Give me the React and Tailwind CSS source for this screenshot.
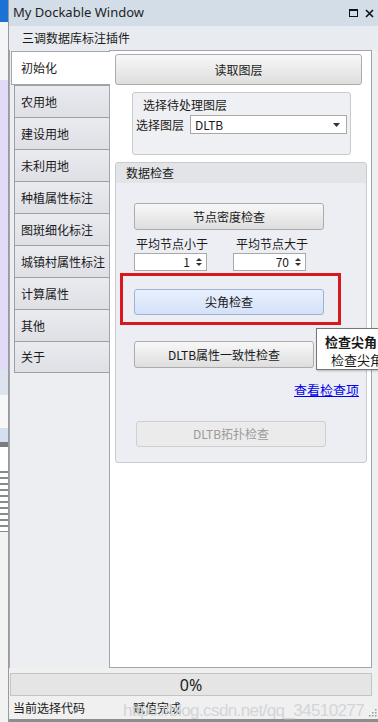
import React from 'react'

const tabs = ['农用地', '建设用地', '未利用地', '种植属性标注', '图斑细化标注', '城镇村属性标注', '计算属性', '其他', '关于']

function Btn({ children, className = '', variant = 'normal' }) {
  const look =
    variant === 'hot'
      ? 'border-[#9db3d6] bg-linear-to-b from-[#e9f0fd] to-[#d3e1f8] text-[#1a1a1a]'
      : variant === 'off'
      ? 'border-[#cdcfd2] bg-[#ebebeb] text-[#9b9b9b]'
      : 'border-[#acacac] bg-linear-to-b from-[#f8f8f8] to-[#dedede] text-[#1a1a1a]'
  return (
    <div className={`flex items-center justify-center rounded-[3px] border ${look} ${className}`}>
      {children}
    </div>
  )
}

function SpinBox({ value }) {
  return (
    <div className="flex h-[18px] w-[73px] items-center justify-end border border-[#a9a9a9] bg-white pr-[4px]">
      <span className="mr-[6px] text-[12px]">{value}</span>
      <svg width="6" height="12" viewBox="0 0 6 12">
        <path d="M0 5 L3 2 L6 5 Z" fill="#333" />
        <path d="M0 7 L3 10 L6 7 Z" fill="#333" />
      </svg>
    </div>
  )
}

function LeftStrip() {
  return (
    <div className="flex w-[8px] flex-col">
      <div className="h-[22px] bg-[#1b72d4]" />
      <div className="h-[58px] bg-[#f4f5f7]" />
      <div className="h-[290px] bg-[#e2daf6]" />
      <div className="h-[25px] bg-[#dde4ee]" />
      <div className="h-[33px] bg-[#f7f7f7]" />
      <div className="h-[14px] bg-[#d4e0ef]" />
      <div className="h-[5px] bg-[#7c7c7c]" />
      <div className="h-[21px] bg-white" />
      <div className="h-[64px] bg-[repeating-linear-gradient(to_bottom,#ffffff_0px,#ffffff_3px,#8a8a8a_3px,#8a8a8a_5px,#ffffff_5px,#ffffff_6px)]" />
      <div className="flex-1 bg-[#f2f2f2]" />
    </div>
  )
}

export default function App() {
  return (
    <div className="relative flex h-[722px] w-[378px] overflow-hidden bg-[#f0f0f0] text-[12px] text-[#1a1a1a] [font-family:'Noto_Sans_CJK_SC',sans-serif]">
      <LeftStrip />

      <div className="flex flex-1 flex-col border-l border-[#979a9e]">
        {/* title bar */}
        <div className="flex h-[26px] items-center justify-between bg-[#d2dde8] pl-[4px] pr-[4px]">
          <span className="text-[13px] text-[#1e1e1e] [font-family:'Noto_Sans',sans-serif]">My Dockable Window</span>
          <div className="flex items-center gap-[7px]">
            <div className="h-[8px] w-[9px] border border-t-2 border-[#111]" />
            <svg width="9" height="9" viewBox="0 0 9 9">
              <path d="M1 1 L8 8 M8 1 L1 8" stroke="#111" strokeWidth="1.6" />
            </svg>
          </div>
        </div>

        {/* plugin tab */}
        <div className="flex h-[24px] items-center bg-[#e8ebef] pl-[13px]">
          <span className="text-[12px]">三调数据库标注插件</span>
        </div>

        {/* body */}
        <div className="flex flex-1 pr-[6px]">
          <div className="flex w-[101px] flex-col border-l border-r border-[#a2a6ac] bg-[#eceef2] pt-[1px]">
            <div className="relative z-10 -mr-[1px] ml-[1px] flex h-[34px] items-center border-b border-l border-t border-[#a2a6ac] bg-white pl-[9px]">
              初始化
            </div>
            {tabs.map((t, i) => (
              <div
                key={t}
                className={`ml-[4px] flex h-[32px] items-center border-l border-t border-[#9ca0a6] bg-linear-to-b from-[#eaebef] to-[#dfe0e6] pl-[6px] ${i === tabs.length - 1 ? 'border-b' : ''}`}
              >
                {t}
              </div>
            ))}
          </div>

          <div className="flex flex-1 flex-col border-b border-r border-t border-[#a2a6ac] bg-white">
            <Btn className="ml-[5px] mt-[3px] h-[31px] w-[247px]">读取图层</Btn>

            <div className="ml-[22px] mt-[7px] flex h-[63px] w-[219px] flex-col rounded-[3px] border border-[#c8cace] bg-[#eff0f3] pt-[3px]">
              <div className="h-[18px] pl-[10px] leading-[18px]">选择待处理图层</div>
              <div className="mt-[1px] flex items-center pl-[3px]">
                <span className="w-[54px]">选择图层</span>
                <div className="flex h-[19px] w-[157px] items-center justify-between border border-[#a9a9a9] bg-white pl-[4px] pr-[6px]">
                  <span>DLTB</span>
                  <svg width="7" height="4" viewBox="0 0 7 4">
                    <path d="M0 0 L7 0 L3.5 4 Z" fill="#333" />
                  </svg>
                </div>
              </div>
            </div>

            <div className="relative ml-[5px] mt-[7px] flex h-[301px] w-[252px] flex-col rounded-[3px] border border-[#c8cace] bg-[#eceef3]">
              <div className="h-[20px] rounded-t-[3px] bg-[#e2e4e8] pl-[10px] leading-[20px]">数据检查</div>

              <Btn className="ml-[18px] mt-[20px] h-[27px] w-[190px]">节点密度检查</Btn>

              <div className="mt-[6px] flex h-[16px] items-center">
                <span className="ml-[20px] w-[100px]">平均节点小于</span>
                <span>平均节点大于</span>
              </div>
              <div className="mt-[1px] flex">
                <div className="ml-[18px]"><SpinBox value="1" /></div>
                <div className="ml-[26px]"><SpinBox value="70" /></div>
              </div>

              <Btn variant="hot" className="ml-[18px] mt-[18px] h-[26px] w-[190px]">尖角检查</Btn>

              <Btn className="ml-[18px] mt-[26px] h-[27px] w-[180px]">DLTB属性一致性检查</Btn>

              <div className="mt-[12px] flex justify-end pr-[7px]">
                <span className="text-[13px] text-[#0000ee] underline">查看检查项</span>
              </div>

              <Btn variant="off" className="ml-[20px] mt-[21px] h-[26px] w-[190px]">DLTB拓扑检查</Btn>

              {/* annotation highlight */}
              <div className="absolute left-[4px] top-[110px] h-[52px] w-[221px] border-[3px] border-[#d8181c]" />
            </div>
          </div>
        </div>

        {/* progress */}
        <div className="ml-[1px] mr-[6px] mt-[5px] flex h-[23px] items-center justify-center border border-[#c2c4c7] bg-[#e5e5e5]">
          <span className="text-[16px] text-[#222] [font-family:'Noto_Sans',sans-serif]">0%</span>
        </div>

        {/* status */}
        <div className="relative flex h-[26px] items-center border-b-[3px] border-[#8d8d8d] bg-[#f0f0f0] pl-[4px]">
          <span className="w-[120px]">当前选择代码</span>
          <span>赋值完成</span>
          <span className="pointer-events-none absolute left-[114px] top-[2px] text-[17px] tracking-[-0.6px] text-[#d2d5d9] [font-family:'Liberation_Sans_Narrow','Liberation_Sans',sans-serif]">
            https://blog.csdn.net/qq_34510277
          </span>
          <svg className="absolute bottom-[2px] right-[1px]" width="9" height="9" viewBox="0 0 9 9">
            <rect x="7" y="1" width="1.5" height="1.5" fill="#999" />
            <rect x="4" y="4" width="1.5" height="1.5" fill="#999" />
            <rect x="7" y="4" width="1.5" height="1.5" fill="#999" />
            <rect x="1" y="7" width="1.5" height="1.5" fill="#999" />
            <rect x="4" y="7" width="1.5" height="1.5" fill="#999" />
            <rect x="7" y="7" width="1.5" height="1.5" fill="#999" />
          </svg>
        </div>
      </div>

      {/* tooltip */}
      <div className="absolute left-[316px] top-[328px] flex h-[42px] w-[80px] flex-col border border-[#767676] bg-white pl-[8px] pt-[4px] shadow-[1px_1px_2px_rgba(0,0,0,0.25)]">
        <span className="text-[13px] font-bold leading-[17px]">检查尖角</span>
        <span className="pl-[6px] text-[13px] leading-[19px]">检查尖角</span>
      </div>
    </div>
  )
}
